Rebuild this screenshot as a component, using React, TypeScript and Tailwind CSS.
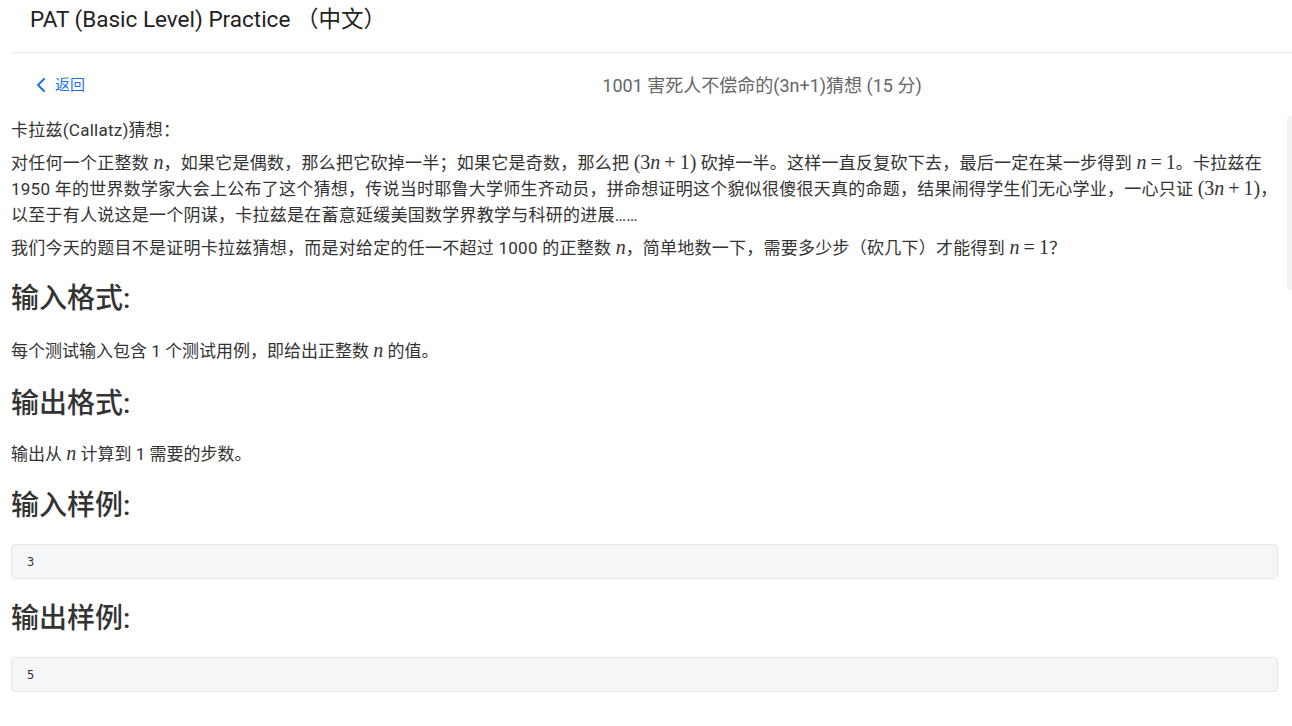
import React from "react";

const M = ({ children }: { children: React.ReactNode }) => (
  <span className="text-[20px] leading-none tracking-normal" style={{ fontFamily: '"Liberation Serif", "DejaVu Serif", serif' }}>
    {children}
  </span>
);
const I = ({ children }: { children: React.ReactNode }) => <i className="italic">{children}</i>;
const Op = ({ children }: { children: React.ReactNode }) => <span className="mx-[4px]">{children}</span>;

const N = () => (
  <M>
    <I>n</I>
  </M>
);

const Expr = () => (
  <M>
    (3<I>n</I>
    <Op>+</Op>1)
  </M>
);
const Eq = () => (
  <M>
    <I>n</I>
    <Op>=</Op>1
  </M>
);

export default function App() {
  return (
    <div
      className="w-[1292px] h-[726px] overflow-hidden bg-white text-[#333]"
      style={{ fontFamily: 'Roboto, "Noto Sans CJK SC", sans-serif' }}
    >
      <header className="h-[39px] flex items-center pl-[30px] text-[22.5px] text-[#222]">
        PAT (Basic Level) Practice （中文）
      </header>
      <div className="ml-[11px] mt-[13px] border-t border-[#ebebeb]" />
      <div className="relative flex items-center h-[64px] pl-[35px] pr-[11px]">
        <a className="flex items-center gap-[8px] text-[#1a73e8] text-[15px]">
          <svg width="12" height="16" viewBox="0 0 12 16" fill="none">
            <path d="M9 2L3 8l6 6" stroke="#1a73e8" strokeWidth="2" strokeLinecap="round" strokeLinejoin="round" />
          </svg>
          <span>返回</span>
        </a>
        <div className="absolute left-0 right-0 text-center text-[18px] text-[#666] pointer-events-none pl-[232px]">
          1001 害死人不偿命的(3n+1)猜想 (15 分)
        </div>
      </div>
      <div className="flex">
        <main className="w-[1267px] ml-[11px] text-[17px] leading-[26px] text-[#333]">
          <div className="tracking-[0.25px]">
            <p className="mb-[7px]">卡拉兹(Callatz)猜想：</p>
            <p className="mb-[7px]">
              对任何一个正整数 <N />，如果它是偶数，那么把它砍掉一半；如果它是奇数，那么把 <Expr /> 砍掉一半。这样一直反复砍下去，最后一定在某一步得到 <Eq />
              。卡拉兹在 1950 年的世界数学家大会上公布了这个猜想，传说当时耶鲁大学师生齐动员，拼命想证明这个貌似很傻很天真的命题，结果闹得学生们无心学业，一心只证 <Expr />
              ，以至于有人说这是一个阴谋，卡拉兹是在蓄意延缓美国数学界教学与科研的进展……
            </p>
            <p>
              我们今天的题目不是证明卡拉兹猜想，而是对给定的任一不超过 1000 的正整数 <N />
              ，简单地数一下，需要多少步（砍几下）才能得到 <Eq />？
            </p>
          </div>
          <h2 className="text-[28px] leading-[36px] font-medium text-[#333] mt-[20px] mb-[21px]">输入格式:</h2>
          <p>
            每个测试输入包含 1 个测试用例，即给出正整数 <N /> 的值。
          </p>
          <h2 className="text-[28px] leading-[36px] font-medium text-[#333] mt-[22px] mb-[19px]">输出格式:</h2>
          <p>
            输出从 <N /> 计算到 1 需要的步数。
          </p>
          <h2 className="text-[28px] leading-[36px] font-medium text-[#333] mt-[21px] mb-[20px]">输入样例:</h2>
          <pre
            className="h-[35px] flex items-center px-[15px] bg-[#f5f6f8] border border-[#e4e6ea] rounded-[4px] text-[12px] text-[#333]"
            style={{ fontFamily: '"DejaVu Sans Mono", monospace' }}
          >
            3
          </pre>
          <h2 className="text-[28px] leading-[36px] font-medium text-[#333] mt-[22px] mb-[20px]">输出样例:</h2>
          <pre
            className="h-[35px] flex items-center px-[15px] bg-[#f5f6f8] border border-[#e4e6ea] rounded-[4px] text-[12px] text-[#333]"
            style={{ fontFamily: '"DejaVu Sans Mono", monospace' }}
          >
            5
          </pre>
        </main>
        <div className="ml-[9px] mt-[-1px] w-[5px] h-[174px] bg-[#f1f2f4] rounded-tl-[4px] rounded-bl-[4px]" />
      </div>
    </div>
  );
}
